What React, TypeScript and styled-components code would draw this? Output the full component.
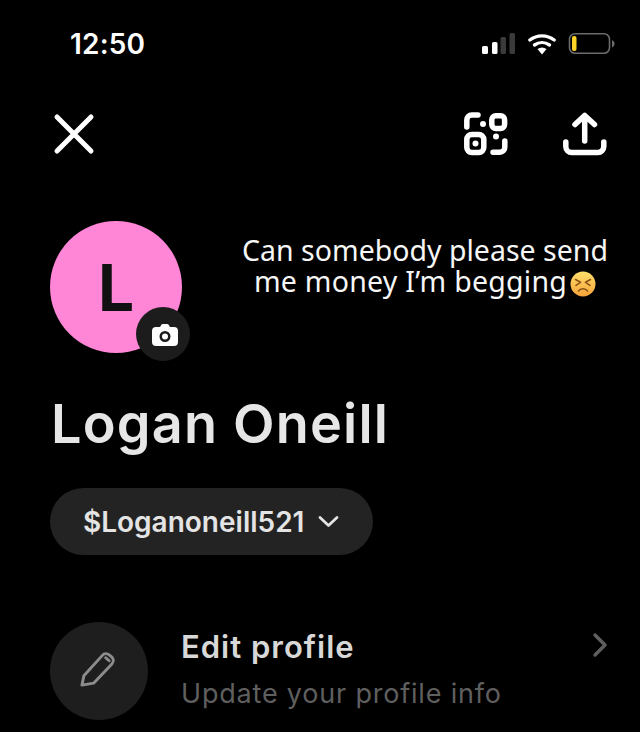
import React from "react";
import styled, { createGlobalStyle } from "styled-components";

const Global = createGlobalStyle`
  html, body { margin: 0; padding: 0; background: #000; }
  body { font-family: Inter, "Liberation Sans", sans-serif; color: #fff; }
`;

const Page = styled.div`
  width: 640px;
  height: 732px;
  overflow: hidden;
  background: #000;
  display: flex;
  flex-direction: column;
`;

const StatusBar = styled.div`
  height: 44px;
  padding: 22px 24px 0 70px;
  display: flex;
  align-items: center;
  justify-content: space-between;
`;

const Time = styled.div`
  font-size: 28px;
  font-weight: 600;
  line-height: 44px;
  letter-spacing: 0.2px;
`;

const StatusIcons = styled.div`
  display: flex;
  align-items: center;
`;

const Toolbar = styled.div`
  margin-top: 42px;
  padding: 0 33px 0 53px;
  display: flex;
  align-items: center;
  justify-content: space-between;
  height: 52px;
`;

const ToolGroup = styled.div`
  display: flex;
  align-items: center;
  gap: 55px;
`;

const ProfileRow = styled.div`
  margin-top: 61px;
  padding-left: 50px;
  display: flex;
  align-items: flex-start;
`;

const Avatar = styled.div`
  position: relative;
  flex: none;
  width: 132px;
  height: 132px;
  border-radius: 50%;
  background: #ff85d6;
  color: #111;
  display: flex;
  align-items: center;
  justify-content: center;
  font-size: 64px;
  font-weight: 700;
`;

const CameraBadge = styled.div`
  position: absolute;
  left: 86px;
  top: 86px;
  width: 54px;
  height: 54px;
  box-sizing: border-box;
  padding: 2px 0 0 4px;
  border-radius: 50%;
  background: #1c1c1c;
  display: flex;
  align-items: center;
  justify-content: center;
`;

const Bio = styled.div`
  flex: 1;
  margin: 14px 28px 0 56px;
  text-align: center;
  white-space: nowrap;
  font-family: "Noto Sans", sans-serif;
  font-size: 28.5px;
  line-height: 31px;
  color: #f6f6f6;
`;

const BioLine = styled.span`
  letter-spacing: 0.25px;
`;

const Emoji = styled.svg`
  display: inline-block;
  vertical-align: -5px;
  margin-left: 3px;
`;

const Name = styled.h1`
  margin: 38px 0 0 51px;
  font-size: 54px;
  line-height: 66px;
  font-weight: 600;
  letter-spacing: 1.2px;
  color: #e6e6e6;
`;

const HandlePill = styled.div`
  margin: 31px 0 0 50px;
  width: 323px;
  height: 67px;
  box-sizing: border-box;
  padding-left: 33px;
  gap: 14px;
  border-radius: 34px;
  background: #232323;
  display: flex;
  align-items: center;
  font-size: 28px;
  font-weight: 600;
  color: #e4e4e4;
`;

const MenuRow = styled.div`
  margin-top: 67px;
  padding: 0 32px 0 50px;
  display: flex;
  align-items: center;
`;

const MenuIcon = styled.div`
  flex: none;
  width: 98px;
  height: 98px;
  box-sizing: border-box;
  padding: 0 3px 3px 0;
  border-radius: 50%;
  background: #1e1e1e;
  display: flex;
  align-items: center;
  justify-content: center;
`;

const MenuText = styled.div`
  flex: 1;
  margin-left: 33px;
  padding-bottom: 2px;
  display: flex;
  flex-direction: column;
  gap: 10px;
`;

const MenuTitle = styled.div`
  font-size: 31px;
  line-height: 38px;
  font-weight: 600;
  letter-spacing: 1px;
  color: #d8d8d8;
`;

const MenuSub = styled.div`
  font-size: 27px;
  line-height: 36px;
  color: #5f5f5f;
  letter-spacing: 0.8px;
`;

const ChevronSlot = styled.div`
  align-self: flex-start;
  margin-top: 10px;
`;

export default function App() {
  return (
    <Page>
      <Global />
      <StatusBar>
        <Time>12:50</Time>
        <StatusIcons>
          <svg width="134" height="24" viewBox="0 0 134 24">
            <rect x="0" y="14" width="6" height="8" rx="1.5" fill="#fff" />
            <rect x="10" y="10" width="5.5" height="12" rx="1.5" fill="#fff" />
            <rect x="18.500" y="5" width="5.500" height="17" rx="1.5" fill="#3a3a3a" />
            <rect x="27.500" y="1" width="5.500" height="21" rx="1.5" fill="#3a3a3a" />
            <path d="M47.800 8a20 20 0 0 1 24.400 0M52.500 13a13 13 0 0 1 15 0" fill="none" stroke="#fff" strokeWidth="3.400" strokeLinecap="round" />
            <path d="M55.500 17a8 8 0 0 1 9 0L60 22.500z" fill="#fff" />
            <rect x="87.500" y="1.800" width="40" height="19.500" rx="5.500" fill="none" stroke="#6b6b6b" strokeWidth="1.600" />
            <rect x="90" y="4" width="4.500" height="15" rx="2" fill="#ffd426" />
            <path d="M130 8a4 4 0 0 1 0 7.500z" fill="#6b6b6b" />
          </svg>
        </StatusIcons>
      </StatusBar>
      <Toolbar>
        <svg width="42" height="42" viewBox="0 0 42 42">
          <path d="M4 4L38 38M38 4L4 38" stroke="#fff" strokeWidth="5" strokeLinecap="round" />
        </svg>
        <ToolGroup>
          <svg width="44" height="44" viewBox="0 0 44 44" fill="none" stroke="#fff" strokeWidth="5.500" strokeLinecap="round">
            <path d="M2.800 15V8a5 5 0 0 1 5-5H14" />
            <circle cx="19" cy="12" r="3" fill="#fff" stroke="none" />
            <rect x="27.800" y="3.800" width="12.800" height="12.800" rx="4" />
            <rect x="2.800" y="22.500" width="17" height="18" rx="5" />
            <circle cx="11.500" cy="31.500" r="3" fill="#fff" stroke="none" />
            <circle cx="32" cy="24.500" r="3" fill="#fff" stroke="none" />
            <path d="M40.800 29v6a5 5 0 0 1-5 5.300H29" />
          </svg>
          <svg width="44" height="44" viewBox="0 0 44 44" fill="none" stroke="#fff" strokeWidth="5.500" strokeLinecap="round" strokeLinejoin="round">
            <path d="M21.700 29V3.500M12 12.500L21.700 3.500l9.800 9" />
            <path d="M2.800 30v4.500a6 6 0 0 0 6 6h26a6 6 0 0 0 6-6V30" />
          </svg>
        </ToolGroup>
      </Toolbar>
      <ProfileRow>
        <Avatar>
          L
          <CameraBadge>
            <svg width="26" height="22" viewBox="0 0 26 22">
              <path fillRule="evenodd" fill="#fff" d="M8 3l1.200-2a2 2 0 0 1 1.700-1h4.200a2 2 0 0 1 1.700 1L18 3h4a4 4 0 0 1 4 4v11a4 4 0 0 1-4 4H4a4 4 0 0 1-4-4V7a4 4 0 0 1 4-4zM13 7a5.500 5.500 0 1 0 0 11a5.500 5.500 0 0 0 0-11zM13 9.500a3 3 0 1 1 0 6a3 3 0 0 1 0-6z" />
            </svg>
          </CameraBadge>
        </Avatar>
        <Bio>
          Can somebody please send
          <br />
          <BioLine>me money I’m begging</BioLine>
          <Emoji width="26" height="26" viewBox="0 0 26 26">
            <defs>
              <linearGradient id="face" x1="0" y1="0" x2="0" y2="1">
                <stop offset="0%" stopColor="#ffdf6b" />
                <stop offset="100%" stopColor="#f7a33a" />
              </linearGradient>
            </defs>
            <circle cx="13" cy="13" r="12.500" fill="url(#face)" />
            <path d="M5.500 8.500l5 2.800-4.500 3M20.500 8.500l-5 2.800 4.500 3M8.500 20c2-3 7-3 9 0" fill="none" stroke="#8a5418" strokeWidth="1.600" strokeLinecap="round" strokeLinejoin="round" />
          </Emoji>
        </Bio>
      </ProfileRow>
      <Name>Logan Oneill</Name>
      <HandlePill>
        $Loganoneill521
        <svg width="21" height="13" viewBox="0 0 21 13" fill="none" stroke="#e4e4e4" strokeWidth="2.800" strokeLinecap="round" strokeLinejoin="round">
          <path d="M2 2.500l8.500 8 8.500-8" />
        </svg>
      </HandlePill>
      <MenuRow>
        <MenuIcon>
          <svg width="37" height="37" viewBox="0 0 38 38" fill="none" stroke="#8c8c8c" strokeWidth="3" strokeLinejoin="round" strokeLinecap="round">
            <path d="M3 35l2-9.500L24 4.500a5 5 0 0 1 7-.5l2.500 2a5 5 0 0 1 .5 7L15 33z" />
            <path d="M27.500 7l3.500 3" />
          </svg>
        </MenuIcon>
        <MenuText>
          <MenuTitle>Edit profile</MenuTitle>
          <MenuSub>Update your profile info</MenuSub>
        </MenuText>
        <ChevronSlot>
          <svg width="16" height="26" viewBox="0 0 16 26" fill="none" stroke="#5f5f5f" strokeWidth="3.400" strokeLinecap="round" strokeLinejoin="round">
            <path d="M3 3l10 10L3 23" />
          </svg>
        </ChevronSlot>
      </MenuRow>
    </Page>
  );
}
